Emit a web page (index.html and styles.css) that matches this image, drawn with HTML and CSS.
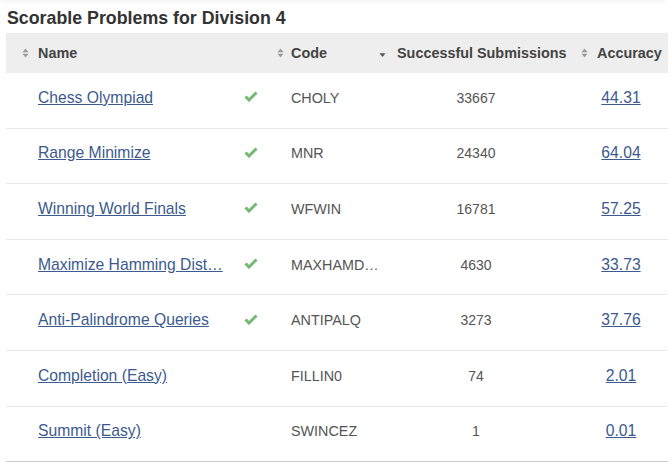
FILE: index.html
```html
<!DOCTYPE html>
<html>
<head>
<meta charset="utf-8">
<link rel="stylesheet" href="styles.css">
</head>
<body>
<div class="prev-card"></div>
<section class="panel">
  <h2 class="title">Scorable Problems for Division 4</h2>
  <div class="table">
    <div class="thead">
      <div class="th c1"><span class="sort"><svg width="7" height="10" viewBox="0 0 7 10"><path d="M0.5 4.2 L3.5 0.5 L6.5 4.2Z M0.5 5.8 L3.5 9.5 L6.5 5.8Z" fill="#9a9a9a"/></svg></span>Name</div>
      <div class="th c2"><span class="sort"><svg width="7" height="10" viewBox="0 0 7 10"><path d="M0.5 4.2 L3.5 0.5 L6.5 4.2Z M0.5 5.8 L3.5 9.5 L6.5 5.8Z" fill="#9a9a9a"/></svg></span>Code</div>
      <div class="th c3"><span class="sort down"><svg width="7" height="10" viewBox="0 0 7 10"><path d="M0.5 5.2 L3.5 9 L6.5 5.2Z" fill="#555"/></svg></span>Successful Submissions</div>
      <div class="th c4"><span class="sort"><svg width="7" height="10" viewBox="0 0 7 10"><path d="M0.5 4.2 L3.5 0.5 L6.5 4.2Z M0.5 5.8 L3.5 9.5 L6.5 5.8Z" fill="#9a9a9a"/></svg></span>Accuracy</div>
    </div>

    <div class="row">
      <div class="td c1"><a class="name" href="#">Chess Olympiad</a><span class="check"><svg width="14" height="11" viewBox="0 0 14 11"><path d="M1.5 5.5 L5 9 L12.5 1.5" fill="none" stroke="#74b874" stroke-width="3"/></svg></span></div>
      <div class="td c2"><span class="code">CHOLY</span></div>
      <div class="td c3">33667</div>
      <div class="td c4"><a href="#">44.31</a></div>
    </div>
    <div class="row">
      <div class="td c1"><a class="name" href="#">Range Minimize</a><span class="check"><svg width="14" height="11" viewBox="0 0 14 11"><path d="M1.5 5.5 L5 9 L12.5 1.5" fill="none" stroke="#74b874" stroke-width="3"/></svg></span></div>
      <div class="td c2"><span class="code">MNR</span></div>
      <div class="td c3">24340</div>
      <div class="td c4"><a href="#">64.04</a></div>
    </div>
    <div class="row">
      <div class="td c1"><a class="name" href="#">Winning World Finals</a><span class="check"><svg width="14" height="11" viewBox="0 0 14 11"><path d="M1.5 5.5 L5 9 L12.5 1.5" fill="none" stroke="#74b874" stroke-width="3"/></svg></span></div>
      <div class="td c2"><span class="code">WFWIN</span></div>
      <div class="td c3">16781</div>
      <div class="td c4"><a href="#">57.25</a></div>
    </div>
    <div class="row">
      <div class="td c1"><a class="name" href="#" title="Maximize Hamming Distance">Maximize Hamming Dist…</a><span class="check"><svg width="14" height="11" viewBox="0 0 14 11"><path d="M1.5 5.5 L5 9 L12.5 1.5" fill="none" stroke="#74b874" stroke-width="3"/></svg></span></div>
      <div class="td c2"><span class="code" title="MAXHAMDIST">MAXHAMD…</span></div>
      <div class="td c3">4630</div>
      <div class="td c4"><a href="#">33.73</a></div>
    </div>
    <div class="row">
      <div class="td c1"><a class="name" href="#">Anti-Palindrome Queries</a><span class="check"><svg width="14" height="11" viewBox="0 0 14 11"><path d="M1.5 5.5 L5 9 L12.5 1.5" fill="none" stroke="#74b874" stroke-width="3"/></svg></span></div>
      <div class="td c2"><span class="code">ANTIPALQ</span></div>
      <div class="td c3">3273</div>
      <div class="td c4"><a href="#">37.76</a></div>
    </div>
    <div class="row">
      <div class="td c1"><a class="name" href="#">Completion (Easy)</a></div>
      <div class="td c2"><span class="code">FILLIN0</span></div>
      <div class="td c3">74</div>
      <div class="td c4"><a href="#">2.01</a></div>
    </div>
    <div class="row last">
      <div class="td c1"><a class="name" href="#">Summit (Easy)</a></div>
      <div class="td c2"><span class="code">SWINCEZ</span></div>
      <div class="td c3">1</div>
      <div class="td c4"><a href="#">0.01</a></div>
    </div>
  </div>
</section>
</body>
</html>
```

FILE: styles.css
```css
* { box-sizing: border-box; }

html, body {
  margin: 0;
  padding: 0;
  background: #ffffff;
  font-family: "Liberation Sans", Arial, sans-serif;
}

.prev-card {
  width: 665px;
  height: 1px;
  margin-top: -1px;
  box-shadow: 0 1px 4px rgba(0, 0, 0, 0.18);
}

.panel {
  padding-left: 6px;
}

.title {
  margin: 0;
  padding: 8px 0 0 1px;
  font-size: 17.8px;
  line-height: 21px;
  font-weight: bold;
  color: #333333;
}

.table {
  width: 662px;
  margin-top: 4px;
}

.thead {
  display: grid;
  grid-template-columns: 270px 102px 196px 94px;
  height: 40px;
  background: #eeeeee;
}

.th {
  display: flex;
  align-items: center;
  font-size: 14.4px;
  font-weight: bold;
  color: #444444;
  white-space: nowrap;
}

.sort {
  display: inline-flex;
  width: 7px;
  height: 10px;
  flex: none;
}

.sort svg { display: block; }

.th.c1 { padding-left: 16px; }
.th.c1 .sort { margin-right: 9px; }
.th.c2 { padding-left: 1px; }
.th.c2 .sort { margin-right: 7px; }
.th.c3 { padding-left: 1px; }
.th.c3 .sort { margin-right: 11px; }
.th.c4 { padding-left: 7px; }
.th.c4 .sort { margin-right: 9px; }

.row {
  display: grid;
  grid-template-columns: 270px 102px 196px 94px;
  height: 55.6px;
  border-bottom: 1px solid #e8e8e8;
}

.row.last {
  border-bottom-color: #c9c9c9;
}

.td {
  display: flex;
  align-items: center;
  padding-bottom: 5px;
  white-space: nowrap;
}

a {
  color: #3c5a8e;
  text-decoration: underline;
  font-size: 15.7px;
}

.td.c1 { padding-left: 32px; }

.name {
  display: block;
  width: 190px;
  white-space: nowrap;
}

.check {
  display: inline-flex;
  margin-left: 16px;
  margin-top: -2px;
}

.check svg { display: block; }

.td.c2 { padding-left: 15px; }

.code {
  display: block;
  font-size: 14.35px;
  color: #555555;
  white-space: nowrap;
}

.td.c3 {
  justify-content: center;
  font-size: 14px;
  color: #555555;
}

.td.c4 {
  justify-content: center;
}
```
